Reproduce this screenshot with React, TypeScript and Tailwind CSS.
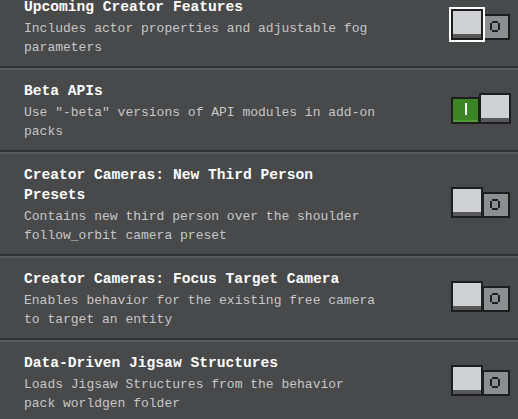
import React from "react";

type Row = {
  title: string[];
  desc: string[];
  on?: boolean;
  focused?: boolean;
};

const rows: Row[] = [
  {
    title: ["Upcoming Creator Features"],
    desc: ["Includes actor properties and adjustable fog", "parameters"],
    focused: true,
  },
  {
    title: ["Beta APIs"],
    desc: ['Use "-beta" versions of API modules in add-on', "packs"],
    on: true,
  },
  {
    title: ["Creator Cameras: New Third Person", "Presets"],
    desc: ["Contains new third person over the shoulder", "follow_orbit camera preset"],
  },
  {
    title: ["Creator Cameras: Focus Target Camera"],
    desc: ["Enables behavior for the existing free camera", "to target an entity"],
  },
  {
    title: ["Data-Driven Jigsaw Structures"],
    desc: ["Loads Jigsaw Structures from the behavior", "pack worldgen folder"],
  },
];

function Knob({ focused }: { focused?: boolean }) {
  return (
    <div
      className={
        "relative z-10 flex h-[31px] w-[32px] shrink-0 flex-col border-2 border-[#1e1e1f] " +
        (focused ? "outline-2 outline-white" : "")
      }
    >
      <div className="flex-1 bg-[#d0d1d4]" />
      <div className="h-[4px] bg-[#58585a]" />
    </div>
  );
}

function Toggle({ on, focused }: { on?: boolean; focused?: boolean }) {
  if (on) {
    return (
      <div className="flex w-[60px] items-end">
        <div className="flex h-[27px] w-[29px] shrink-0 flex-col border-2 border-[#1e1e1f] bg-[#3c8527]">
          <div className="flex flex-1 items-center justify-center">
            <div className="h-[12px] w-[2px] bg-white" />
          </div>
          <div className="h-[2px] bg-[#4f9b38]" />
        </div>
        <div className="-ml-px">
          <Knob focused={focused} />
        </div>
      </div>
    );
  }
  return (
    <div className="flex w-[60px] items-end">
      <Knob focused={focused} />
      <div className="-ml-px flex h-[26px] w-[28px] shrink-0 items-center justify-center border-2 border-[#1e1e1f] bg-[#8d8e91] pr-[3px] pb-px">
        <svg width="10" height="11" viewBox="0 0 10 11" className="block">
          <path
            d="M2 0h6v2H2zM2 9h6v2H2zM0 2h2v7H0zM8 2h2v7H8z"
            fill="#1f1f20"
          />
        </svg>
      </div>
    </div>
  );
}

export default function App() {
  return (
    <div
      className="h-[419px] w-[518px] overflow-hidden bg-[#48494a]"
      style={{ fontFamily: '"Liberation Mono", "DejaVu Sans Mono", monospace' }}
    >
      <div className="-mt-[14px] flex flex-col">
        {rows.map((r, i) => (
          <div key={i} className="flex flex-col">
            <div className="flex items-center justify-between pl-[24px] pr-[7px] pt-[10.5px] pb-[9.5px]">
              <div className="flex flex-col">
                {r.title.map((t, j) => (
                  <div
                    key={j}
                    className="whitespace-nowrap text-[14.6px] font-bold leading-[20px] text-white"
                  >
                    {t}
                  </div>
                ))}
                <div className="mt-[2px] flex flex-col">
                  {r.desc.map((d, j) => (
                    <div
                      key={j}
                      className="whitespace-nowrap text-[13px] leading-[19px] text-[#c6c7c9]"
                    >
                      {d}
                    </div>
                  ))}
                </div>
              </div>
              <div className="pb-[5px]">
                <Toggle on={r.on} focused={r.focused} />
              </div>
            </div>
            <div className="h-[2px] bg-[#313233]" />
            <div className="h-[2px] bg-[#5a5b5c]" />
          </div>
        ))}
      </div>
    </div>
  );
}
